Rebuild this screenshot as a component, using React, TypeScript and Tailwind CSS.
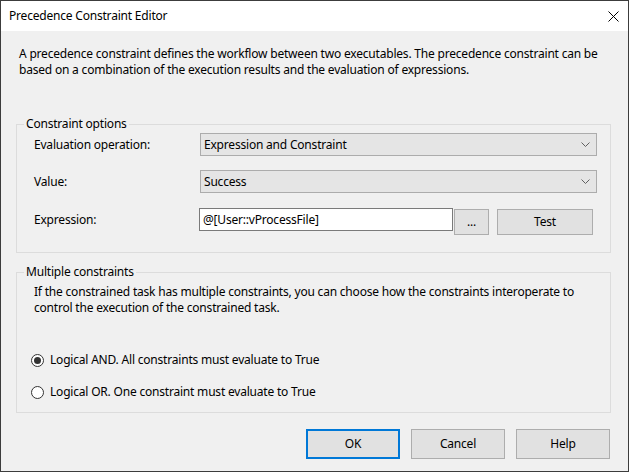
import React from "react";

const font = "font-['Segoe_UI','Noto_Sans',sans-serif]";

function Chevron() {
  return (
    <svg width="9" height="5" viewBox="0 0 9 5" className="shrink-0">
      <path d="M0.5 0.5 L4.5 4.5 L8.5 0.5" fill="none" stroke="#606060" strokeWidth="1" />
    </svg>
  );
}

function Dropdown({ value }: { value: string }) {
  return (
    <div className="w-[397px] h-[23px] bg-[#e5e5e5] border border-[#acacac] flex items-center justify-between pl-[3px] pr-[6px]">
      <span className="leading-[16px]">{value}</span>
      <Chevron />
    </div>
  );
}

function Radio({ checked, label }: { checked?: boolean; label: string }) {
  return (
    <div className="flex items-center h-[16px]">
      <span className="w-[13px] h-[13px] rounded-full border border-[#333333] bg-white flex items-center justify-center">
        {checked && <span className="w-[7px] h-[7px] rounded-full bg-[#333333]" />}
      </span>
      <span className="ml-[6px] leading-[16px]">{label}</span>
    </div>
  );
}

export default function App() {
  return (
    <div className={`w-[629px] h-[472px] border border-[#3c3c3c] bg-[#f0f0f0] flex flex-col text-[12px] tracking-[-0.2px] text-black ${font}`}>
      {/* Title bar */}
      <div className="h-[30px] bg-white flex items-center justify-between pl-[8px] pr-[9px] shrink-0">
        <span className="leading-[16px]">Precedence Constraint Editor</span>
        <svg width="11" height="11" viewBox="0 0 11 11">
          <path d="M0.5 0.5 L10.5 10.5 M10.5 0.5 L0.5 10.5" stroke="#000" strokeWidth="1" />
        </svg>
      </div>

      <div className="flex-1 pl-[15px] pr-[17px] pt-[15px]">
        <p className="ml-[3px] leading-[16px] whitespace-nowrap">
          A precedence constraint defines the workflow between two executables. The precedence constraint can be
          <br />
          based on a combination of the execution results and the evaluation of expressions.
        </p>

        {/* Constraint options */}
        <fieldset className="mt-[38px] border border-[#dcdcdc] p-0 m-0 min-w-0">
          <legend className="ml-[7px] px-[2px] leading-[16px]">Constraint options</legend>
          <div className="pl-[17px] pt-[1px] pb-[17px] flex flex-col">
            <div className="flex items-center h-[23px]">
              <span className="w-[166px]">Evaluation operation:</span>
              <Dropdown value="Expression and Constraint" />
            </div>
            <div className="flex items-center h-[23px] mt-[14px]">
              <span className="w-[166px]">Value:</span>
              <Dropdown value="Success" />
            </div>
            <div className="flex items-start h-[27px] mt-[15px]">
              <span className="w-[165px] h-[23px] flex items-center">Expression:</span>
              <div className="w-[254px] h-[23px] bg-white border border-[#7a7a7a] flex items-center pl-[3px]">
                @[User::vProcessFile]
              </div>
              <button className="ml-[1px] mt-[1px] w-[35px] h-[26px] bg-[#e1e1e1] border border-[#adadad] flex items-center justify-center leading-none">
                ...
              </button>
              <button className="ml-[8px] mt-[1px] w-[96px] h-[26px] bg-[#e1e1e1] border border-[#adadad] flex items-center justify-center">
                Test
              </button>
            </div>
          </div>
        </fieldset>

        {/* Multiple constraints */}
        <fieldset className="mt-[11px] border border-[#dcdcdc] p-0 m-0 min-w-0">
          <legend className="ml-[7px] px-[2px] leading-[16px]">Multiple constraints</legend>
          <div className="pl-[14px] pt-[4px] pb-[12px]">
            <p className="ml-[3px] leading-[16px] whitespace-nowrap">
              If the constrained task has multiple constraints, you can choose how the constraints interoperate to
              <br />
              control the execution of the constrained task.
            </p>
            <div className="mt-[36px] flex flex-col gap-[16px]">
              <Radio checked label="Logical AND. All constraints must evaluate to True" />
              <Radio label="Logical OR. One constraint must evaluate to True" />
            </div>
          </div>
        </fieldset>

        {/* Dialog buttons */}
        <div className="mt-[16px] flex justify-end gap-[11px] mr-[1px]">
          <button className="w-[94px] h-[30px] bg-[#e1e1e1] border-2 border-[#0078d7] flex items-center justify-center">
            OK
          </button>
          <button className="w-[94px] h-[30px] bg-[#e1e1e1] border border-[#adadad] flex items-center justify-center">
            Cancel
          </button>
          <button className="w-[94px] h-[30px] bg-[#e1e1e1] border border-[#adadad] flex items-center justify-center">
            Help
          </button>
        </div>
      </div>
    </div>
  );
}
